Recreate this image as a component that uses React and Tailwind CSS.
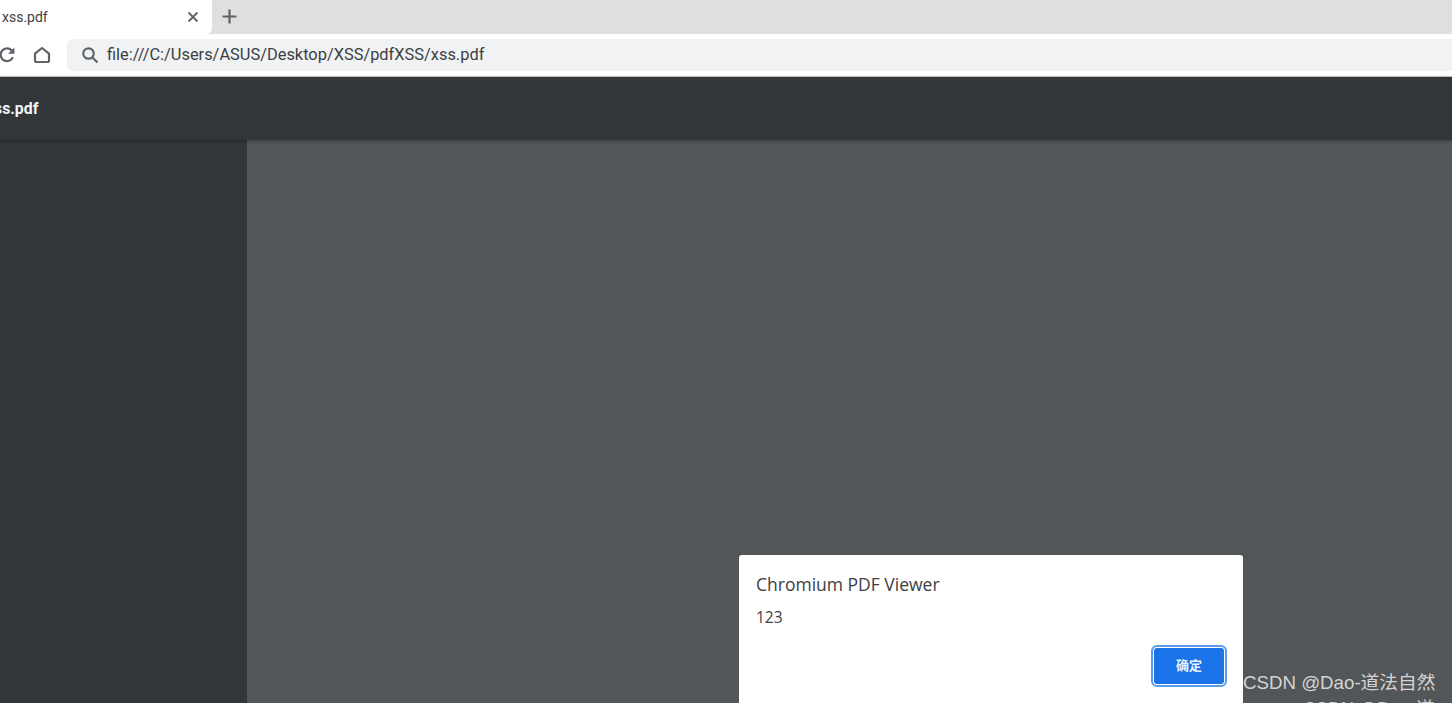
import React from "react";

function CloseIcon() {
  return (
    <svg width="12" height="12" viewBox="0 0 12 12" fill="none" stroke="#5f6368" strokeWidth="1.8">
      <path d="M1.5 1.5l9 9M10.5 1.5l-9 9" />
    </svg>
  );
}

function PlusIcon() {
  return (
    <svg width="15" height="15" viewBox="0 0 15 15" fill="none" stroke="#5f6368" strokeWidth="2.2">
      <path d="M7.5 0.5v14M0.5 7.5h14" />
    </svg>
  );
}

function ReloadIcon() {
  return (
    <svg width="18" height="18" viewBox="0 0 18 18" fill="none" stroke="#5f6368" strokeWidth="2.2">
      <path d="M15 11.2A6.4 6.4 0 1 1 13.8 4.4L15.6 6.2" />
      <path d="M16.4 1.4v6.4H10" fill="#5f6368" stroke="none" />
    </svg>
  );
}

function HomeIcon() {
  return (
    <svg width="18" height="18" viewBox="0 0 18 18" fill="none" stroke="#5f6368" strokeWidth="2.2" strokeLinejoin="round">
      <path d="M2 7.6L9 2l7 5.6V14.5a1.5 1.5 0 0 1-1.5 1.5h-11A1.5 1.5 0 0 1 2 14.5z" />
    </svg>
  );
}

function SearchIcon() {
  return (
    <svg width="18" height="18" viewBox="0 0 18 18" fill="none" stroke="#5f6368" strokeWidth="2.2">
      <circle cx="7.5" cy="7.5" r="5.2" />
      <path d="M11 11l5.5 5.5" />
    </svg>
  );
}

export default function App() {
  return (
    <div className="relative flex h-[703px] w-[1452px] flex-col overflow-hidden bg-[#525659] font-['Roboto','Noto_Sans_CJK_SC',sans-serif]">
      {/* tab strip */}
      <div className="flex h-[34px] shrink-0 items-center bg-[#dfdfdf]">
        <div className="flex h-full w-[212px] items-center justify-between rounded-br-md bg-white pl-[2px] pr-[13px]">
          <span className="text-[14px] text-[#3c4043]">xss.pdf</span>
          <CloseIcon />
        </div>
        <div className="ml-[10px] flex items-center pb-[2px]">
          <PlusIcon />
        </div>
      </div>

      {/* toolbar */}
      <div className="flex h-[43px] shrink-0 items-center border-b border-[#c4c6c8] bg-white">
        <div className="ml-[-2px] flex w-[69px] items-center gap-[17px] pb-[1px]">
          <ReloadIcon />
          <HomeIcon />
        </div>
        <div className="mb-[1px] flex h-[32px] flex-1 items-center gap-[8px] rounded-l-md bg-[#f1f2f3] pl-[14px]">
          <SearchIcon />
          <span className="pt-[1px] text-[16.4px] text-[#3c4043]">file:///C:/Users/ASUS/Desktop/XSS/pdfXSS/xss.pdf</span>
        </div>
      </div>

      {/* pdf viewer title bar */}
      <div className="z-10 flex h-[63px] shrink-0 items-center overflow-hidden bg-[#323639] shadow-[0_1px_3px_rgba(0,0,0,0.3)]">
        <span className="ml-[-14px] text-[15.8px] font-bold text-[#f1f3f4]">xss.pdf</span>
      </div>

      {/* sidebar and page area */}
      <div className="flex flex-1">
        <div className="w-[247px] shrink-0 bg-[#323639]" />
        <div className="flex-1 bg-[#525659]" />
      </div>

      {/* alert dialog */}
      <div className="absolute left-[739px] top-[555px] h-[160px] w-[504px] rounded-[3px] bg-white pl-[17px] pt-[17px] text-[#202124]">
        <div className="font-['Open_Sans','Noto_Sans',sans-serif] text-[17.5px] leading-[24px] text-[#3c4043]">Chromium PDF Viewer</div>
        <div className="mt-[11px] font-['Open_Sans','Noto_Sans',sans-serif] text-[15.5px] leading-[20px] text-[#3c4043]">123</div>
        <div className="absolute left-[415px] top-[93px] flex h-[36px] w-[70px] items-center justify-center rounded-[3px] bg-[#1a73e8] text-[13px] font-bold text-[#e8f0fe] outline-2 outline-offset-1 outline-[#5a9bf0]">
          确定
        </div>
      </div>

      {/* watermark */}
      <div className="absolute left-[1243px] top-[671px] whitespace-nowrap font-['Liberation_Sans','Noto_Sans_CJK_SC',sans-serif] text-[18.7px] leading-[24px] text-[#d4d4d4]">
        CSDN @Dao-道法自然
      </div>
      <div className="absolute left-[1303px] top-[698px] whitespace-nowrap font-['Liberation_Sans','Noto_Sans_CJK_SC',sans-serif] text-[18px] leading-[22px] text-[#d4d4d4]">
        CSDN @Dao-道
      </div>
    </div>
  );
}
